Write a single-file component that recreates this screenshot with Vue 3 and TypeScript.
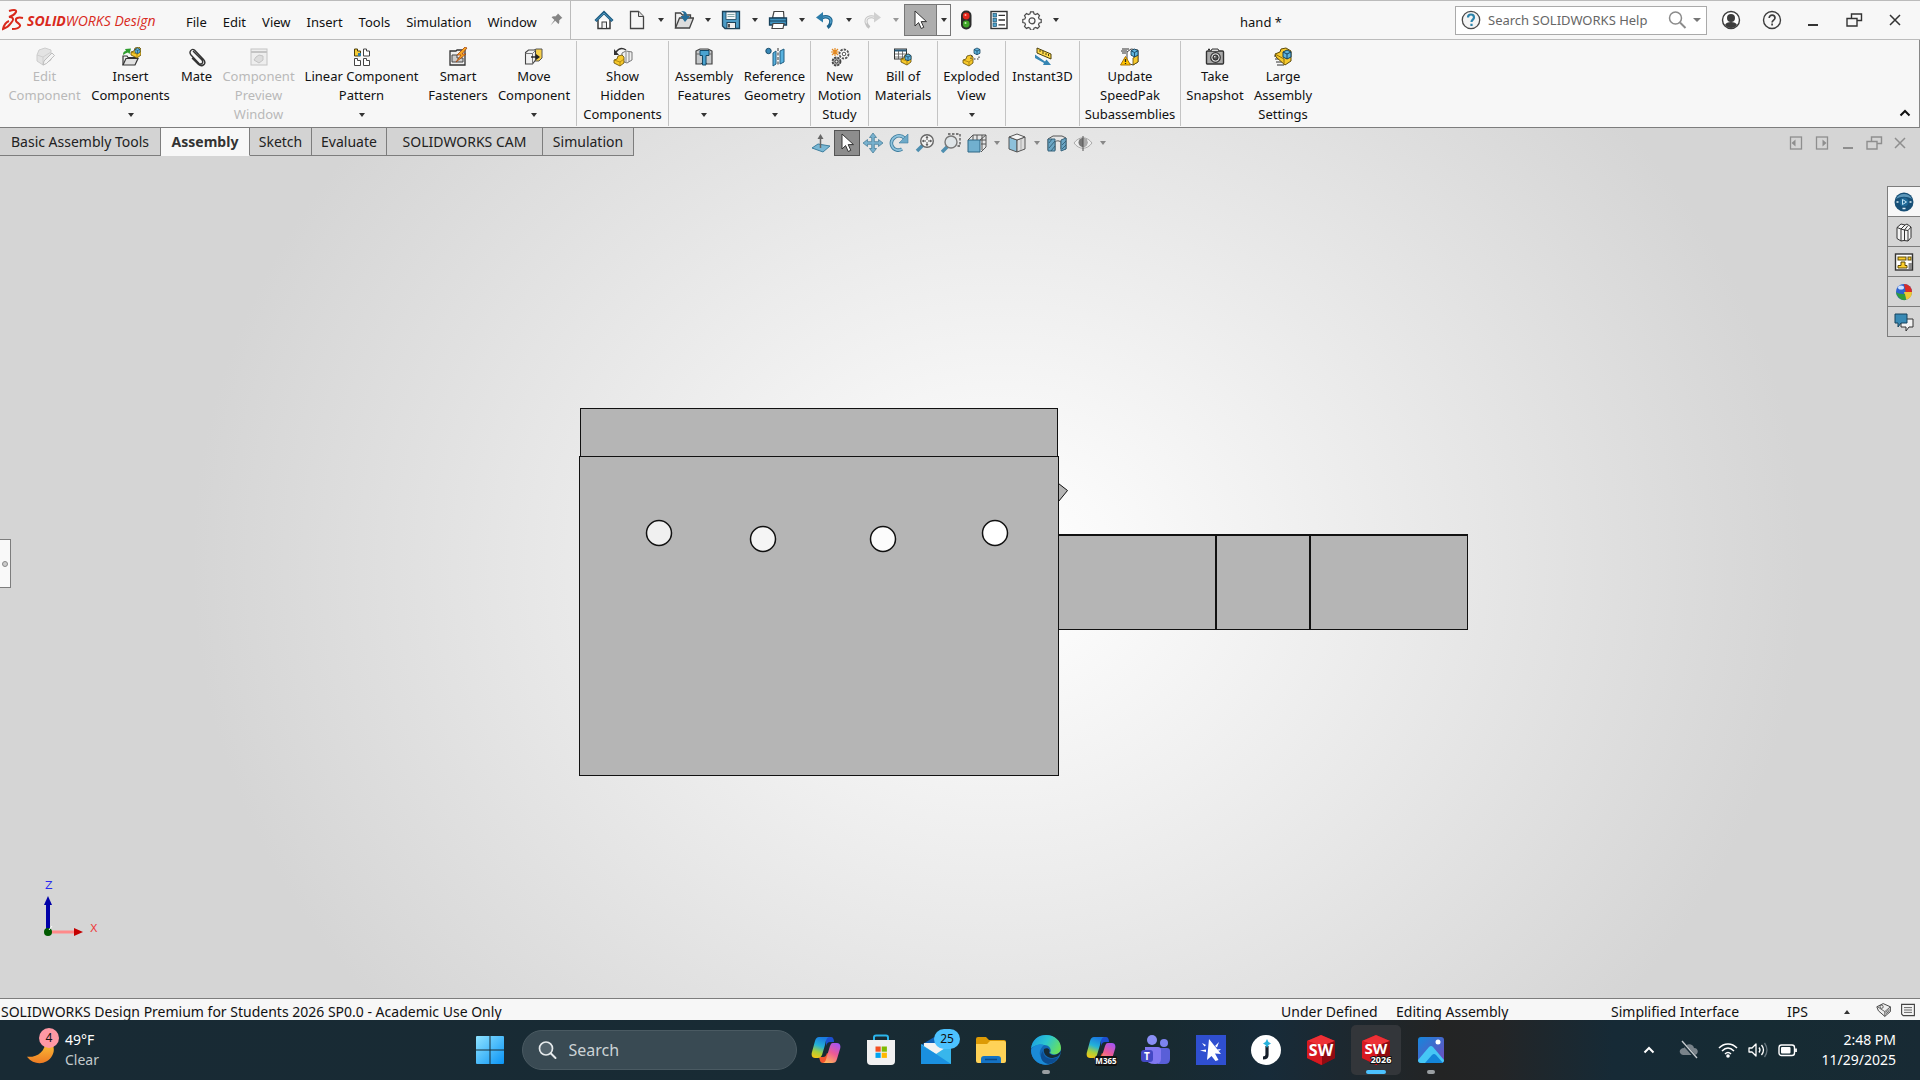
<script setup lang="ts">
interface RibbonItem { icon: string; lines: string[]; width: number; caret?: boolean; disabled?: boolean }
interface Tool { icon: string; label: string; caret?: boolean; disabled?: boolean; active?: boolean }

const menus = ['File', 'Edit', 'View', 'Insert', 'Tools', 'Simulation', 'Window']

const quickTools: Tool[] = [
  { icon: 'home', label: 'Home' },
  { icon: 'page', label: 'New', caret: true },
  { icon: 'open', label: 'Open', caret: true },
  { icon: 'save', label: 'Save', caret: true },
  { icon: 'print', label: 'Print', caret: true },
  { icon: 'undo', label: 'Undo', caret: true },
  { icon: 'redo', label: 'Redo', caret: true, disabled: true },
  { icon: 'cursor', label: 'Select', caret: true, active: true },
  { icon: 'traffic', label: 'Rebuild' },
  { icon: 'list', label: 'Properties' },
  { icon: 'gear', label: 'Options', caret: true },
]

const windowTools: Tool[] = [
  { icon: 'user', label: 'Account' },
  { icon: 'help', label: 'Help' },
  { icon: 'min', label: 'Minimize' },
  { icon: 'restore', label: 'Restore' },
  { icon: 'close', label: 'Close' },
]

const ribbonGroups: RibbonItem[][] = [
  [
    { icon: 'editPart', lines: ['Edit', 'Component'], width: 83, disabled: true },
    { icon: 'insertPart', lines: ['Insert', 'Components'], width: 89, caret: true },
    { icon: 'clip', lines: ['Mate'], width: 43 },
    { icon: 'preview', lines: ['Component', 'Preview', 'Window'], width: 81, disabled: true },
    { icon: 'pattern', lines: ['Linear Component', 'Pattern'], width: 125, caret: true },
    { icon: 'smart', lines: ['Smart', 'Fasteners'], width: 68 },
    { icon: 'move', lines: ['Move', 'Component'], width: 84, caret: true },
  ],
  [{ icon: 'showHidden', lines: ['Show', 'Hidden', 'Components'], width: 91 }],
  [
    { icon: 'asmFeature', lines: ['Assembly', 'Features'], width: 70, caret: true },
    { icon: 'refGeom', lines: ['Reference', 'Geometry'], width: 71, caret: true },
  ],
  [{ icon: 'motion', lines: ['New', 'Motion', 'Study'], width: 57 }],
  [{ icon: 'bom', lines: ['Bill of', 'Materials'], width: 68 }],
  [{ icon: 'explode', lines: ['Exploded', 'View'], width: 67, caret: true }],
  [{ icon: 'instant', lines: ['Instant3D'], width: 73 }],
  [{ icon: 'speedpak', lines: ['Update', 'SpeedPak', 'Subassemblies'], width: 100 }],
  [
    { icon: 'camera', lines: ['Take', 'Snapshot'], width: 68 },
    { icon: 'largeAsm', lines: ['Large', 'Assembly', 'Settings'], width: 68 },
  ],
]

const tabs = [
  { name: 'Basic Assembly Tools', width: 161 },
  { name: 'Assembly', width: 89 },
  { name: 'Sketch', width: 62 },
  { name: 'Evaluate', width: 75 },
  { name: 'SOLIDWORKS CAM', width: 156 },
  { name: 'Simulation', width: 91 },
]
const activeTab = 'Assembly'

const viewTools: Tool[] = [
  { icon: 'normalTo', label: 'Normal To' },
  { icon: 'cursor', label: 'Select', active: true },
  { icon: 'pan', label: 'Pan' },
  { icon: 'rotate', label: 'Rotate' },
  { icon: 'zoomFit', label: 'Zoom to Fit' },
  { icon: 'zoomArea', label: 'Zoom to Area' },
  { icon: 'orient', label: 'View Orientation', caret: true },
  { icon: 'display', label: 'Display Style', caret: true },
  { icon: 'section', label: 'Section View' },
  { icon: 'eye', label: 'Hide/Show Items', caret: true },
]

const docTools: Tool[] = [
  { icon: 'paneLeft', label: 'Collapse left' },
  { icon: 'paneRight', label: 'Collapse right' },
  { icon: 'min', label: 'Minimize document' },
  { icon: 'restore', label: 'Restore document' },
  { icon: 'close', label: 'Close document' },
]

const paneTools: Tool[] = [
  { icon: 'compass', label: 'Resources', active: true },
  { icon: 'books', label: 'Design Library' },
  { icon: 'palette', label: 'View Palette' },
  { icon: 'ball', label: 'Appearances' },
  { icon: 'forum', label: 'Forum' },
]

const holes = [
  { x: 659, y: 405, fill: '#f0f0f0' },
  { x: 763, y: 411, fill: '#f5f5f5' },
  { x: 883, y: 411, fill: '#fcfcfc' },
  { x: 995, y: 405, fill: '#ffffff' },
]

const apps = [
  { icon: 'copilot', label: 'Copilot' },
  { icon: 'store', label: 'Store' },
  { icon: 'mail', label: 'Mail', badge: '25' },
  { icon: 'folder', label: 'File Explorer' },
  { icon: 'edge', label: 'Edge', state: 'open' },
  { icon: 'm365', label: 'Microsoft 365' },
  { icon: 'teams', label: 'Teams' },
  { icon: 'star', label: 'Star' },
  { icon: 'jot', label: 'J' },
  { icon: 'sw', label: 'SOLIDWORKS' },
  { icon: 'sw26', label: 'SOLIDWORKS 2026', state: 'current' },
  { icon: 'photos', label: 'Photos', state: 'open' },
]

const yellowPart = (x: number, y: number) =>
  `<g transform="translate(${x} ${y})"><path d="M0 5l3-1 1-3 4-1 2 2v6l-4 3-6-3z" fill="#f7c92c" stroke="#5d4a08" stroke-width=".8"/><path d="M0 5l6 2 4-3M6 7v4" fill="none" stroke="#a57c08" stroke-width=".8"/></g>`

const bluecube = (x: number, y: number, s = 7) =>
  `<g transform="translate(${x} ${y}) scale(${s / 8})"><path d="M0 2l4-2 4 2v5l-4 2-4-2z" fill="#5fb4dc" stroke="#16405c"/><path d="M0 2l4 2 4-2M4 4v5" fill="none" stroke="#16405c"/></g>`

const swCube = (size: number, base: number) =>
  '<path d="M2 7L16 1l14 6v17L16 31 2 24z" fill="#b01018"/><path d="M2 7L16 1l14 6-13 5z" fill="#ee3036"/><path d="M2 7l15 5v19L2 24z" fill="#d71920"/><path d="M30 7l-13 5v19l13-7z" fill="#8f0b12"/>' +
  `<text x="16" y="${base}" font-size="${size}" font-weight="700" text-anchor="middle" fill="#fff">SW</text>`

const ribbonLoops = (id: string) =>
  `<defs><linearGradient id="${id}a" x1=".5" y1="0" x2=".2" y2="1"><stop offset="0" stop-color="#1a7be0"/><stop offset=".4" stop-color="#24b2d8"/><stop offset=".7" stop-color="#a8cf3c"/><stop offset="1" stop-color="#f7c613"/></linearGradient><linearGradient id="${id}b" x1=".8" y1="0" x2=".3" y2="1"><stop offset="0" stop-color="#a554f5"/><stop offset=".5" stop-color="#ee5a94"/><stop offset="1" stop-color="#ffb25c"/></linearGradient></defs>` +
  `<path d="M16 3h5c2 0 3 2 3 5h-4c-2 0-3 1-4 4z" fill="#1d4fd0"/><path d="M16 29h-3c-3 0-3-3-4-6h4c2 0 3-1 4-4l3 2z" fill="#f4562f"/><path d="M9 3h10c-3 1-3 4-4 8l-3 10c-1 2-2 3-4 3H5c-3 0-4-3-3-6L5 7c1-3 2-4 4-4z" fill="url(#${id}a)"/><path d="M23 9h4c3 0 4 3 3 6l-3 10c-1 3-2 4-5 4h-9c3-1 3-4 4-7l3-10c1-2 1-3 3-3z" fill="url(#${id}b)"/>`

const icons: Record<string, string> = {
  home: '<path d="M4 10v8.500h12V10" fill="#fff" stroke="#3b3b3b" stroke-width="1.500"/><rect x="8" y="12" width="4.500" height="6.500" fill="#eee" stroke="#3b3b3b"/><path d="M1.500 11L10 2.500l8.500 8.500" fill="none" stroke="#1b5a80" stroke-width="3"/><path d="M2 10.500L10 3l8 7.500" fill="none" stroke="#5aa7cf" stroke-width=".8"/>',
  page: '<path d="M3.500 1.500h8l5 5v12h-13z" fill="#f6f6f6" stroke="#444" stroke-width="1.300"/><path d="M11.500 1.500v5h5" fill="#ddd" stroke="#444"/>',
  open: '<path d="M1.500 18V3h5l2 2h8v3" fill="#f2f2f2" stroke="#444" stroke-width="1.300"/><path d="M1.500 18l4-10h14l-4 10z" fill="#ddd" stroke="#444" stroke-width="1.300"/><path d="M7 1c4 0 6 1 6 5h3l-5 6-4.500-6H10C10 3 9 2 7 1z" fill="#256d97"/>',
  save: '<path d="M1.500 1.500h17v17H4l-2.500-2.500z" fill="#4d9cc6" stroke="#1d4258" stroke-width="1.300"/><rect x="5" y="2" width="10" height="7.500" fill="#f4f8fa" stroke="#1d4258" stroke-width=".8"/><path d="M6.500 4.500h7M6.500 6.500h7" stroke="#8aa"/><rect x="6" y="12.500" width="8.500" height="6" fill="#eee" stroke="#1d4258"/><path d="M8 14v3.500" stroke="#222" stroke-width="1.500"/>',
  print: '<path d="M4.500 8L6 1.500h9.500L16 8z" fill="#fff" stroke="#444" stroke-width="1.200"/><path d="M1.500 8h17v7h-17z" fill="#4293bf" stroke="#17425c" stroke-width="1.300"/><path d="M1.500 11h17" stroke="#17425c"/><path d="M5 13.500h11l-1 5H4z" fill="#fff" stroke="#444" stroke-width="1.200"/>',
  undo: '<path d="M6.500 8C12 5 17.500 8 15.500 13.500 15 15 14 16.500 12.500 17.500" fill="none" stroke="#1f658e" stroke-width="3.400"/><path d="M6.500 8C12 5 17.500 8 15.500 13.500" fill="none" stroke="#58a9d4" stroke-width="1.200"/><path d="M1 7.500L8 2v10.500z" fill="#2c7ca9"/>',
  redo: '<path d="M13.500 8C8 5 2.500 8 4.500 13.500c.5 1.500 1.500 3 3 4" fill="none" stroke="#c3c3c3" stroke-width="3"/><path d="M13.500 8C8 5 2.500 8 4.500 13.500" fill="none" stroke="#eee" stroke-width="1.200"/><path d="M19 7.500L12 2v10.500z" fill="#d0d0d0"/>',
  cursor: '<path d="M5 1v15l3.600-3.400 2.600 5.900 2.600-1.200-2.600-5.700h5.300z" fill="#fff" stroke="#333"/>',
  traffic: '<rect x="5" y=".5" width="10.500" height="19" rx="5" fill="#2c2c2c"/><circle cx="10.200" cy="6" r="3.400" fill="#e2271c"/><circle cx="10.200" cy="14" r="3.400" fill="#3fa428"/><circle cx="9.500" cy="5" r="1" fill="#ffb0a0"/><circle cx="9.500" cy="13" r="1" fill="#c0f0b0"/>',
  list: '<rect x="2" y="1.500" width="16" height="17" fill="#fff" stroke="#333" stroke-width="1.400"/><g fill="#4fa3cd" stroke="#1c4d69" stroke-width=".7"><rect x="4" y="3.500" width="3.500" height="3.500"/><rect x="4" y="8.300" width="3.500" height="3.500"/><rect x="4" y="13" width="3.500" height="3.500"/></g><path d="M9.500 5.300h6.500M9.500 10h6.500M9.500 14.800h6.500" stroke="#333" stroke-width="1.300"/>',
  gear: '<path d="M8.500 1.800h3l.5 2 1.600.7 1.900-1 2 2-1 1.900.7 1.600 2 .5v3l-2 .5-.7 1.500 1 1.900-2 2-1.900-1-1.600.7-.5 2h-3l-.5-2-1.600-.7-1.900 1-2-2 1-1.900-.7-1.500-2-.5v-3l2-.5.7-1.600-1-1.900 2-2 1.900 1 1.600-.7z" fill="#fcfcfc" stroke="#4c4c4c" stroke-width="1.200"/><circle cx="10" cy="10.800" r="3" fill="#f7f7f7" stroke="#4c4c4c" stroke-width="1.200"/>',
  pin: '<path d="M12.500 2l5.500 5.500-1.500.5-2.500 2.500c.5 2 0 3.500-1 4.500L9 11l-6 6 5-7-3.500-3.500c1-1 2.500-1.500 4.500-1l2.500-2z" fill="#858585"/>',
  qmark: '<circle cx="10" cy="10" r="8.700" fill="#f4f4f4" stroke="#4a4a4a" stroke-width="1.300"/><path d="M7 7.500c0-4 6-4 6 0 0 2-2.500 2.200-2.500 4.500M10.500 13.800V16" fill="none" stroke="#2c83ab" stroke-width="2.200"/>',
  lens: '<circle cx="8.500" cy="8" r="6" fill="none" stroke="#8b8b8b" stroke-width="1.500"/><path d="M13 12.500l5.500 5.500" stroke="#8b8b8b" stroke-width="2"/>',
  user: '<circle cx="10" cy="10" r="8.500" fill="#fff" stroke="#3c3c3c" stroke-width="1.400"/><circle cx="10" cy="8" r="4" fill="#3c3c3c"/><path d="M4 15c1-4 11-4 12 0-3 4-9 4-12 0z" fill="#3c3c3c"/>',
  help: '<circle cx="10" cy="10" r="8.500" fill="none" stroke="#3c3c3c" stroke-width="1.400"/><path d="M7.200 8c0-4 5.800-3.600 5.800 0 0 2-2.900 2.200-2.900 4.500M10.100 13.600v2" fill="none" stroke="#3c3c3c" stroke-width="1.700"/>',
  min: '<path d="M5 15h10" stroke="currentColor" stroke-width="2"/>',
  restore: '<path d="M7.500 8.500V4h10v6.500h-4M3 8.500h10V16H3z" fill="none" stroke="currentColor" stroke-width="1.400"/>',
  close: '<path d="M5 5l10 10M15 5L5 15" stroke="currentColor" stroke-width="1.500"/>',
  editPart: '<path d="M2 8l2-5 6-2 6 2v10l-8 5-6-4z" fill="#e3e3e3" stroke="#cdcdcd"/><path d="M2 8l6 2 8-5M8 10v8" fill="none" stroke="#cfcfcf"/><path d="M8 18l1-4 8-8 2.500 2.500-8 8z" fill="#f4f4f4" stroke="#bdbdbd"/>',
  insertPart: `<path d="M2 18V9h4l1 1.500h8V13" fill="#eee" stroke="#333" stroke-width="1.200"/><path d="M2 18l3-6.500h12L14 18z" fill="#e2e2e2" stroke="#333" stroke-width="1.200"/>${yellowPart(10, 0)}${bluecube(14, 1, 5)}<path d="M2 8C2 5 3 4 5 4L4 2l6-.500L8.500 7 7 5.500C5 6 4 7 2 8z" fill="#2f9e2f"/>`,
  clip: '<path d="M6 4l9 9c2 3-1 5-3 3.500L4 8C1.500 5 4.500 1 7.500 3l9 9.500c3.500 4-1 8-5 5L5 11" fill="none" stroke="#333" stroke-width="1.400"/>',
  preview: '<rect x="2" y="2" width="16" height="16" fill="#eee" stroke="#c4c4c4"/><path d="M2 5h16" stroke="#c4c4c4" stroke-width="2"/><path d="M5 13l2-3 3-2 4 1v4l-4 3z" fill="#ddd" stroke="#c4c4c4"/>',
  pattern: '<path d="M2.500 2h3v2h3v5h-6z" fill="#f6cd37" stroke="#4b3d0a"/><rect x="6" y="6" width="3" height="3" fill="#2a7cad"/><g fill="#fff" stroke="#444"><path d="M11.500 2h3v2h3v5h-6zM2.500 11.500h3v2h3v5h-6zM11.500 11.500h3v2h3v5h-6z"/></g>',
  smart: '<path d="M2 4h6l1-1h8v15H2z" fill="#eee" stroke="#333" stroke-width="1.300"/><path d="M4 8h5v3h6v4H4z" fill="#ccc" stroke="#444"/><path d="M17 0l-8 8h4l-5 7 10-8h-4l5-6z" fill="#f6a623" stroke="#a3420f" stroke-width=".8"/>',
  move: '<path d="M9 4l3-2h6v9l-3 3H9z" fill="#f7d04a" stroke="#555"/><path d="M1.500 5.500l3-2.500h7v10l-3 4h-7z" fill="#f1f1f1" stroke="#444" stroke-width="1.100"/><path d="M1.500 6.500h7v10M8.500 6.500l3-3" fill="none" stroke="#777"/><path d="M7 10h6" stroke="#222" stroke-width="1.400"/><path d="M12 7l4 3-4 3z" fill="#222"/>',
  showHidden: `<path d="M9 6l4-2 6 1v8l-5 3-5-2z" fill="#f0f0f0" stroke="#777"/><path d="M13 5v10M16 5v10" stroke="#888"/>${yellowPart(1, 8)}<path d="M3 5c3-4 7-4 10-2" fill="none" stroke="#333" stroke-width="1.500"/><path d="M1 2v6h5z" fill="#333"/>`,
  asmFeature: '<path d="M2 4l4-2h8l4 2v13h-5l-3-2-3 2H2z" fill="#c5c8ca" stroke="#444" stroke-width="1.200"/><path d="M6 3.500h9v5h-3V18H8.500V8.500H6z" fill="#4ba3d0" stroke="#154966"/><path d="M2 7h4M15 7h3" stroke="#666"/>',
  refGeom: '<circle cx="3.500" cy="4" r="2.700" fill="#3989b7" stroke="#1a4d6c"/><path d="M8 6l3-2v13l-3 2zM15 4l4-2v13l-4 2z" fill="#58b2df" stroke="#205d80"/><path d="M13 1v18" stroke="#333" stroke-dasharray="3 1.500"/>',
  motion: '<path d="M5 1v8M1 5h8M2 2l6 6M8 2L2 8" stroke="#e48a22" stroke-width="1.200"/><circle cx="14" cy="7" r="4.500" fill="#fff" stroke="#555" stroke-width="1.800" stroke-dasharray="2.300 1.100"/><circle cx="14" cy="7" r="1.800" fill="none" stroke="#555"/><circle cx="6.500" cy="14.500" r="4" fill="#aaa" stroke="#444" stroke-width="1.800" stroke-dasharray="2.200 1"/><circle cx="6.500" cy="14.500" r="1.500" fill="#eee" stroke="#333"/>',
  bom: `<rect x="1.500" y="2" width="12" height="10" fill="#fff" stroke="#333"/><path d="M1.500 3.500h12" stroke="#2a5d7c" stroke-width="2"/><path d="M2 7h11M2 10h11M5.500 4v8M9.500 4v8" stroke="#555" stroke-width=".8"/>${yellowPart(8, 7)}${bluecube(12, 7, 6)}`,
  explode: `${yellowPart(1, 8)}${bluecube(12, 1, 6)}<path d="M12 12h5V9M9 12v-3h2" fill="none" stroke="#333" stroke-dasharray="1.500 1.500"/>`,
  instant: '<path d="M4 1l14 6v5L4 6z" fill="#ffd94a" stroke="#4d400c"/><path d="M7 3v2M10 4v3M13 6v2M15.500 7v2" stroke="#4d400c"/><path d="M2 7.500l10 7 1.500-2L18 18h-8l1-2-9-5z" fill="#3686b4"/>',
  speedpak: `<path d="M2 2h7M1 4h6M2 6h4" stroke="#333"/><path d="M7 5l4-3 7 1v12l-5 3-6-2z" fill="#fff" stroke="#444"/><path d="M13 11l5-3v7l-5 3z" fill="#f7c92c" stroke="#5d4a08" stroke-width=".8"/>${bluecube(11, 2, 7)}<path d="M5.500 9.500l5 8.500H.5z" fill="#ffc400" stroke="#ad7400"/><path d="M5.500 12v3M5.500 16v1" stroke="#222" stroke-width="1.300"/>`,
  camera: '<rect x="1.500" y="4" width="17" height="13" rx="1" fill="#aaa" stroke="#333" stroke-width="1.400"/><path d="M6 4l1-2h6l1 2" fill="#ddd" stroke="#333"/><path d="M3 2.500h2" stroke="#333" stroke-width="1.500"/><circle cx="10.500" cy="10.500" r="4.800" fill="#ddd" stroke="#333" stroke-width="1.200"/><circle cx="10.500" cy="10.500" r="2.600" fill="#555" stroke="#222"/><circle cx="9.800" cy="9.800" r=".8" fill="#fff"/>',
  largeAsm: `<path d="M1 9h6M2 12h5M3 15h6M4 18h7" stroke="#333"/><path d="M2 7l5-2 1-3 5-1 5 3v10l-6 4-9-8z" fill="#f7c92c" stroke="#5d4a08"/><path d="M2 7l9 5v6" fill="none" stroke="#8c6d0a"/>${bluecube(10, 3, 8)}`,
  chevronUp: '<path d="M5.500 12.500L10 8l4.500 4.500" fill="none" stroke="currentColor" stroke-width="2"/>',
  normalTo: '<path d="M1 15l6-4 12 2-7 6z" fill="#79b7d4" stroke="#3d7f9f"/><path d="M9.500 15V4" stroke="#666" stroke-width="1.500"/><path d="M6.500 6l3-5 3 5z" fill="#666"/>',
  pan: '<path d="M10 0l3.500 4.500H11.300V8.700h4.200V6.500L20 10l-4.500 3.500v-2.200h-4.200v4.200h2.200L10 20l-3.500-4.500h2.200v-4.200H4.500v2.200L0 10l4.500-3.500v2.200h4.200V4.500H6.500z" fill="#79b2cf" stroke="#3c7592" stroke-width=".7"/>',
  rotate: '<path d="M16 5.500C9-1 0 6 3 13c2 4.500 7 5 10 3" fill="none" stroke="#3f7e9f" stroke-width="3.600"/><path d="M16 5.500C9-1 0 6 3 13c2 4.500 7 5 10 3" fill="none" stroke="#8fc3dd" stroke-width="1.800"/><path d="M19 1v9h-9z" fill="#6da9c8" stroke="#3f7e9f" stroke-width=".6"/>',
  zoomFit: '<path d="M8 12l-6 6" stroke="#4f8fb0" stroke-width="3.500"/><circle cx="12" cy="8" r="6.300" fill="#f2f2f2" stroke="#666" stroke-width="1.400"/><path d="M12 3.500v9M7.500 8h9M11 5l1-1.500L13 5M11 11l1 1.500 1-1.500M9 7L7.500 8 9 9M15 7l1.500 1L15 9" fill="none" stroke="#555"/><rect x="11" y="7" width="2" height="2" fill="#f2f2f2"/>',
  zoomArea: '<path d="M7 1h12v12h-3" fill="none" stroke="#555" stroke-dasharray="2.500 1.500" stroke-width="1.300"/><path d="M7 13l-6 6" stroke="#4f8fb0" stroke-width="3.500"/><circle cx="10" cy="9" r="6" fill="#dfe5e8" stroke="#777" stroke-width="1.400"/>',
  orient: '<path d="M1 7h12v12H1z" fill="#71b0cf" stroke="#2f6784"/><path d="M1 7l5-5h13v12l-5 5M6 2v5M13 7l6-5M10 2v5M19 7h-6M19 11h-5M15 2v15" fill="none" stroke="#555"/>',
  display: '<path d="M2 4l8 3v12l-8-3z" fill="#8ec1da" stroke="#555"/><path d="M10 7l8-3v12l-8 3z" fill="#dcdcdc" stroke="#555"/><path d="M2 4l8-3 8 3-8 3z" fill="#f5f5f5" stroke="#555"/><path d="M14 6v11" stroke="#aaa"/>',
  section: '<path d="M1 6l5-3h9l4 2v11h-5V9c-3-2-5-1-6 0v8H1z" fill="#e5e5e5" stroke="#555"/><path d="M1 6h7v12H1zM14 7l5-2v11l-5 2z" fill="#6ba6c5" stroke="#38657d"/><path d="M2 10l3-4M2 15l6-7M4 18l4-5M15 12l4-4M15 16l4-4" stroke="#2d556b" stroke-width=".8"/>',
  eye: '<path d="M1 10c5-7 13-7 18 0-5 7-13 7-18 0z" fill="#eee" stroke="#aaa"/><circle cx="10" cy="9.500" r="4.500" fill="#777"/><path d="M10 5a4.500 4.500 0 010 9z" fill="#aaa"/><path d="M10 3v15" stroke="#555"/>',
  paneLeft: '<rect x="4.500" y="4" width="11" height="12" fill="none" stroke="currentColor" stroke-width="1.300"/><path d="M9.500 6.500v7L5.500 10z" fill="currentColor"/>',
  paneRight: '<rect x="4.500" y="4" width="11" height="12" fill="none" stroke="currentColor" stroke-width="1.300"/><path d="M10.500 6.500v7l4-3.500z" fill="currentColor"/>',
  compass: '<circle cx="10" cy="10" r="9.500" fill="#174f76"/><path d="M2 7a9 9 0 0116 0c-5-3-11-3-16 0z" fill="#5d98bb"/><circle cx="10" cy="10" r="4.500" fill="#1f6896"/><path d="M8.500 7.500v5l4-2.500z" fill="none" stroke="#c2e4f5"/><path d="M2.500 10h2M15.500 10h2M8.500 16.500h3" stroke="#dceffa" stroke-width="1.500"/>',
  books: '<path d="M3 5.500l4-3.500 4 1 2-1 4 3v10.500L14 19l-4-.5-3 .5-4-2.500z" fill="#f4f4f4" stroke="#333"/><path d="M3 5.500l4 1.500v12M7 7l4-4M10.500 8v10.500M7 7l3.500 1L14 3.500M10.500 8L14 8.500V19M14 8.500L17 5" fill="none" stroke="#333"/>',
  palette: '<rect x="1.500" y="2" width="17" height="16" fill="#fff" stroke="#333" stroke-width="1.400"/><rect x="4" y="5" width="8" height="3" fill="#ffd02b" stroke="#5d4a08"/><rect x="14" y="5" width="3" height="3" fill="#ffd02b" stroke="#5d4a08"/><path d="M4 13.500h3V10h4v3.500h2V16H4z" fill="#ffd02b" stroke="#5d4a08"/><path d="M14.500 11H18v6h-3.500z" fill="#888"/>',
  ball: '<circle cx="10" cy="10" r="8" fill="#2c64cf"/><path d="M10 2a8 8 0 018 8l-6 2z" fill="#d92b25"/><path d="M18 10a8 8 0 01-6 7.800L10 10z" fill="#efc832"/><path d="M2 10c2 2 6 2 9 2l1 6C7 19 3 15 2 10z" fill="#319c3a"/><ellipse cx="7" cy="5.500" rx="3" ry="2" fill="#cfe1ff"/>',
  forum: '<path d="M7 7h12v8h-4l-3 4v-4H7z" fill="#f3f3f3" stroke="#333"/><path d="M1 2h12v9H7l-3 4v-4H1z" fill="#398ab5" stroke="#17435c"/>',
  tag: '<path d="M1 6l8-4 9 4v6l-7 6-8-7z" fill="#eee" stroke="#444" stroke-width="1.200"/><path d="M11 18v-6l7-6M11 12L2 6M12 13l5-4M12 15l5-4" fill="none" stroke="#444"/><circle cx="7" cy="6" r="2" fill="none" stroke="#444"/>',
  note: '<path d="M2 3h16v14H4l-2-2z" fill="#f4f4f4" stroke="#444" stroke-width="1.400"/><path d="M5 7h10M5 10h10M5 13h10" stroke="#444"/>',
  start: '<defs><linearGradient id="st" x1="0" y1="0" x2="1" y2="1"><stop offset="0" stop-color="#8fe3ff"/><stop offset="1" stop-color="#0a94f5"/></linearGradient></defs><path d="M2 3q0-1 1-1h12.500v13.500H2zM16.500 2H29q1 0 1 1v12.500H16.500zM2 16.500h13.500V30H3q-1 0-1-1zM16.500 16.500H30V29q0 1-1 1H16.500z" fill="url(#st)"/>',
  taskLens: '<circle cx="9" cy="8.500" r="6.500" fill="#53636c" stroke="#e6eaec" stroke-width="1.700"/><path d="M13.700 13.200L18.500 18" stroke="#e6eaec" stroke-width="2" stroke-linecap="round"/>',
  copilot: ribbonLoops('cp'),
  store: '<path d="M9 8V3.500q0-2 2-2h10q2 0 2 2V8" fill="none" stroke="#2bb5ec" stroke-width="2"/><path d="M2 6h28v21q0 4-4 4H6q-4 0-4-4z" fill="#f1f1f1"/><path d="M10.500 12.500h5.200v5.200h-5.200z" fill="#f25022"/><path d="M16.700 12.500h5.200v5.200h-5.200z" fill="#7fba00"/><path d="M10.500 18.700h5.200v5.200h-5.200z" fill="#00a4ef"/><path d="M16.700 18.700h5.200v5.200h-5.200z" fill="#ffb900"/>',
  mail: '<path d="M1 11L16 2l15 9v19H1z" fill="#0f5fb4"/><path d="M4 9h24v9l-12 7L4 18z" fill="#f2f2f2"/><path d="M1 10l15 10L31 10v20H1z" fill="#38b6ec"/><path d="M1 30V11l15 9 15 10z" fill="#1a90e0"/>',
  folder: '<path d="M1 5q0-2 2-2h8l3 3h15q2 0 2 2v6H1z" fill="#dd9a05"/><path d="M1 10h11l3-3h14q2 0 2 2v18q0 2-2 2H3q-2 0-2-2z" fill="#ffd257"/><path d="M6 29v-4q0-3 3-3h14q3 0 3 3v4z" fill="#1573c4"/><path d="M10 25.500h12" stroke="#0c4884" stroke-width="1.500"/>',
  edge: '<defs><linearGradient id="ed" x1="0" y1=".2" x2="1" y2=".6"><stop offset="0" stop-color="#1b9de2"/><stop offset=".5" stop-color="#2cc6cf"/><stop offset="1" stop-color="#69e05b"/></linearGradient></defs><circle cx="16" cy="16" r="15" fill="#1267b4"/><path d="M1 15C2 5 9 1 16 1c9 0 15 6 15 13 0 6-7 8-11 5 2-3 0-8-6-8C7 10 2 13 1 15z" fill="url(#ed)"/><path d="M14 11c-3 3-5 6-4 10 1 5 6 8 12 8C12 34 1 27 1 16c2-4 8-7 13-5z" fill="#1b8bd7"/><path d="M13 17c0 7 8 10 15 6-2 4-5 7-10 7-7-1-9-9-5-13z" fill="#0c4d91"/><path d="M14 15c4-2 7 1 5 4 3 3 8 3 12-2-1 5-5 7-10 7-5-1-8-5-7-9z" fill="#172b35"/>',
  m365: ribbonLoops('mc') + '<rect x="10" y="22" width="22" height="10" rx="2" fill="#111"/><text x="21" y="30" font-size="8" font-weight="700" text-anchor="middle" fill="#fff">M365</text>',
  teams: '<circle cx="12" cy="6" r="5" fill="#8a8ff5"/><circle cx="24" cy="9" r="4" fill="#7c83ef"/><path d="M18 14h9q3 0 3 3v8q0 5-5 5h-7z" fill="#595fd8"/><path d="M5 13h13q3 0 3 3v9q0 5-6 5-8 0-10-6z" fill="#8178f1"/><rect x="1" y="16" width="12" height="12" rx="3" fill="#4348c4"/><text x="7" y="25.500" font-size="10" font-weight="700" text-anchor="middle" fill="#fff">T</text>',
  star: '<rect x="1" y="1" width="30" height="30" fill="#2f4fd0"/><path d="M14 5l12 15-6-.5 3.500 6.500-3 1-4-5-4.500 4z" fill="#fff"/><path d="M5 16.500l6-1v2.500zM7 9l4 2-1.500 1.500zM20 12l4-4-2 5.500zM22 15.500l4-.5-2 2z" fill="#fff"/>',
  jot: '<circle cx="16" cy="16" r="15" fill="#fff"/><path d="M17 12v9q0 3-4 3" fill="none" stroke="#16202b" stroke-width="3.200"/><path d="M17 5l1.500 3L21 9.500 18.500 11 17 14l-1.500-3L13 9.500 15.500 8z" fill="#27b2dc"/>',
  sw: swCube(16, 22),
  sw26: swCube(15, 20) + '<text x="21" y="29" font-size="9" font-weight="700" text-anchor="middle" fill="#fff" stroke="#111" stroke-width="2" paint-order="stroke">2026</text>',
  photos: '<defs><linearGradient id="ph" x1="0" y1="0" x2="1" y2="1"><stop offset="0" stop-color="#1587dc"/><stop offset="1" stop-color="#7449bb"/></linearGradient></defs><rect x="3" y="3" width="26" height="26" rx="3" fill="url(#ph)"/><path d="M3 26l11-13q2-2 4 0l11 13q0 3-3 3H6q-3 0-3-3z" fill="#45c7f5"/><path d="M10 29l7-8q2-2 4 0l7 8z" fill="#1385d8"/><circle cx="23" cy="8" r="2.500" fill="#fff"/>',
  moon: '<defs><linearGradient id="mn" x1="0" y1="0" x2="0" y2="1"><stop offset="0" stop-color="#ffd63c"/><stop offset="1" stop-color="#ee7b24"/></linearGradient></defs><path d="M20 2c8 4 11 13 7 20-5 9-18 11-26 1 12 1 21-7 19-21z" fill="url(#mn)"/>',
  cloudOff: '<path d="M4 15c-5-1-4-7 1-7 2-5 9-5 10 0 5 0 5 7 0 7z" fill="#79838a"/><path d="M2 1l16 18" stroke="#172b35" stroke-width="3"/><path d="M3 1l15 17" stroke="#c9ced1" stroke-width="1.300"/>',
  wifi: '<path d="M1 8c5-5.500 13-5.500 18 0M4 11c4-4 8-4 12 0M7 14c2-2 4-2 6 0" fill="none" stroke="#fff" stroke-width="1.500"/><circle cx="10" cy="16" r="1.800" fill="#fff"/>',
  volume: '<path d="M1 8h3l4-4v12l-4-4H1z" fill="none" stroke="#fff" stroke-width="1.300" stroke-linejoin="round"/><path d="M11 7.500q2 2.500 0 5M13.500 5q4 5 0 10" fill="none" stroke="#fff" stroke-width="1.300"/><path d="M16.500 3q5 7 0 14" fill="none" stroke="#66757d" stroke-width="1.300"/>',
  battery: '<rect x="1" y="5" width="15.500" height="10.500" rx="2.500" fill="none" stroke="#fff" stroke-width="1.400"/><rect x="3" y="7" width="9.500" height="6.500" rx="1" fill="#fff"/><path d="M18 8.500v3.500" stroke="#fff" stroke-width="1.800"/>',
}
</script>

<template>
  <div class="desktop">
    <header class="titlebar">
      <div class="brand-menu">
        <div class="brand">
          <svg class="ds" viewBox="0 0 22 24" aria-hidden="true">
            <path d="M7 3c3-1 8-2 7 1-1 2-4 4-7 5 5 0 5 3 2 6-2 3-5 5-8 6 1-4 3-7 6-8M21 10c-5-1-8 0-7 3 1 2 5 3 4 5-1 3-5 3-8 3" fill="none" stroke="#d9291c" stroke-width="2" />
          </svg>
          <span><b>SOLID</b>WORKS <i>Design</i></span>
        </div>
        <nav class="menus">
          <button v-for="m in menus" :key="m" type="button">{{ m }}</button>
        </nav>
        <button class="pin" type="button" aria-label="Pin menu">
          <svg class="ico" viewBox="0 0 20 20" v-html="icons.pin" />
        </button>
      </div>

      <div class="quick">
        <div v-for="t in quickTools" :key="t.icon" class="split" :class="{ active: t.active, dim: t.disabled, gapped: !t.caret || t.icon === 'gear' }">
          <button class="split-main" type="button" :aria-label="t.label">
            <svg class="ico" viewBox="0 0 20 20" v-html="icons[t.icon]" />
          </button>
          <button v-if="t.caret" class="split-caret" type="button" :aria-label="t.label + ' options'"><i class="caret"></i></button>
        </div>
      </div>

      <h1 class="doc-title">hand *</h1>

      <label class="help-search">
        <svg class="ico" viewBox="0 0 20 20" v-html="icons.qmark" />
        <input type="text" placeholder="Search SOLIDWORKS Help" aria-label="Search SOLIDWORKS Help" />
        <svg class="ico" viewBox="0 0 20 20" v-html="icons.lens" />
        <i class="caret wide"></i>
      </label>

      <div class="window-tools">
        <button v-for="t in windowTools" :key="t.icon" type="button" :aria-label="t.label">
          <svg class="ico" viewBox="0 0 20 20" v-html="icons[t.icon]" />
        </button>
      </div>
    </header>

    <section class="ribbon">
      <div v-for="(g, gi) in ribbonGroups" :key="gi" class="group">
        <button v-for="r in g" :key="r.icon" class="cmd" type="button" :disabled="r.disabled" :style="{ width: r.width + 'px' }">
          <svg class="ico" viewBox="0 0 20 20" v-html="icons[r.icon]" />
          <span v-for="l in r.lines" :key="l" class="line">{{ l }}</span>
          <span v-if="r.caret" class="line"><i class="caret"></i></span>
        </button>
      </div>
      <button class="collapse" type="button" aria-label="Collapse ribbon">
        <svg class="ico" viewBox="0 0 20 20" v-html="icons.chevronUp" />
      </button>
    </section>

    <main class="viewport">
      <svg class="scene" viewBox="0 0 1920 870" aria-label="hand assembly, top view">
        <g fill="#b5b5b5" stroke="#111" stroke-width="1">
          <path d="M1058.500 355.500l9 7-9 11z" />
          <rect x="1058.500" y="407.500" width="157" height="94" />
          <rect x="1216.500" y="407.500" width="93" height="94" />
          <rect x="1310.500" y="407.500" width="157" height="94" />
          <path d="M1058 407h410M1216 407v95M1310 407v95" stroke-width="2" />
          <rect x="580.500" y="280.500" width="477" height="48" />
          <rect x="579.500" y="328.500" width="479" height="319" />
          <circle v-for="h in holes" :key="h.x" :cx="h.x" :cy="h.y" r="12.500" :fill="h.fill" stroke-width="1.500" />
        </g>
      </svg>

      <div class="top-strip">
        <nav class="tabs">
          <button v-for="t in tabs" :key="t.name" type="button" :class="{ on: t.name === activeTab }" :style="{ width: t.width + 'px' }">{{ t.name }}</button>
        </nav>
        <div class="view-tools">
          <template v-for="t in viewTools" :key="t.icon">
            <button type="button" :class="{ active: t.active }" :aria-label="t.label">
              <svg class="ico" viewBox="0 0 20 20" v-html="icons[t.icon]" />
            </button>
            <button v-if="t.caret" class="thin" type="button" :aria-label="t.label + ' options'"><i class="caret"></i></button>
          </template>
        </div>
        <div class="doc-tools">
          <button v-for="t in docTools" :key="t.icon" type="button" :aria-label="t.label">
            <svg class="ico" viewBox="0 0 20 20" v-html="icons[t.icon]" />
          </button>
        </div>
      </div>

      <button class="flyout" type="button" aria-label="Show feature tree"><i></i></button>

      <aside class="pane">
        <button v-for="t in paneTools" :key="t.icon" type="button" :class="{ on: t.active }" :aria-label="t.label">
          <svg class="ico" viewBox="0 0 20 20" v-html="icons[t.icon]" />
        </button>
      </aside>

      <svg class="triad" viewBox="0 0 64 64" aria-label="Axis triad">
        <text x="5" y="11" font-size="11" fill="#2a2af0">Z</text>
        <path d="M8 54V26" stroke="#0000a8" stroke-width="4" />
        <path d="M8 18l4 9H4z" fill="#0000a8" />
        <path d="M10 54h26" stroke="#ff8a8a" stroke-width="3" />
        <path d="M34 50l9 4-9 4z" fill="#c40000" />
        <circle cx="8" cy="54" r="4" fill="#005a00" />
        <path d="M9 52l3-4" stroke="#fff" />
        <text x="50" y="54" font-size="11" fill="#ee3c3c">X</text>
      </svg>
    </main>

    <footer class="status">
      <span class="edition">SOLIDWORKS Design Premium for Students 2026 SP0.0 - Academic Use Only</span>
      <span class="defined">Under Defined</span>
      <span class="mode">Editing Assembly</span>
      <span class="interface">Simplified Interface</span>
      <span class="units">IPS</span>
      <i class="caret up"></i>
      <svg class="ico" viewBox="0 0 20 20" v-html="icons.tag" />
      <svg class="ico note" viewBox="0 0 20 20" v-html="icons.note" />
    </footer>

    <footer class="taskbar">
      <button class="weather" type="button">
        <span class="moon">
          <svg viewBox="0 0 30 32" v-html="icons.moon" />
          <span class="count">4</span>
        </span>
        <span class="forecast"><span>49°F</span><span class="sky">Clear</span></span>
      </button>
      <div class="center">
        <button class="start" type="button" aria-label="Start"><svg class="app-ico" viewBox="0 0 32 32" v-html="icons.start" /></button>
        <label class="task-search">
          <svg class="ico" viewBox="0 0 20 20" v-html="icons.taskLens" />
          <input type="text" placeholder="Search" aria-label="Search" />
        </label>
        <button v-for="a in apps" :key="a.icon" class="app" :class="a.state" type="button" :aria-label="a.label">
          <span class="tile">
            <svg class="app-ico" viewBox="0 0 32 32" v-html="icons[a.icon]" />
            <span v-if="a.badge" class="badge">{{ a.badge }}</span>
          </span>
        </button>
      </div>
      <div class="tray">
        <button type="button" class="roomy" aria-label="Hidden icons"><svg class="ico" viewBox="0 0 20 20" v-html="icons.chevronUp" /></button>
        <button type="button" class="roomy last" aria-label="Cloud offline"><svg class="ico" viewBox="0 0 20 20" v-html="icons.cloudOff" /></button>
        <button type="button" aria-label="Network"><svg class="ico" viewBox="0 0 20 20" v-html="icons.wifi" /></button>
        <button type="button" aria-label="Volume"><svg class="ico" viewBox="0 0 20 20" v-html="icons.volume" /></button>
        <button type="button" aria-label="Battery"><svg class="ico" viewBox="0 0 20 20" v-html="icons.battery" /></button>
        <time class="clock"><span>2:48 PM</span><span>11/29/2025</span></time>
      </div>
    </footer>
  </div>
</template>

<style>
body { margin: 0; }
</style>

<style scoped>
.desktop {
  display: flex;
  flex-direction: column;
  min-height: 100vh;
  font-family: "Noto Sans", "Open Sans", sans-serif;
  font-size: 13px;
  color: #111;
  background: #f7f7f7;
}
button {
  font: inherit;
  color: inherit;
  background: none;
  border: 0;
  padding: 0;
  display: flex;
  align-items: center;
  justify-content: center;
  white-space: nowrap;
}
input {
  font: inherit;
  border: 0;
  outline: 0;
  background: none;
  padding: 0;
  min-width: 0;
}
.ico { width: 20px; height: 20px; display: block; flex: none; }
.caret {
  display: block;
  flex: none;
  width: 0;
  height: 0;
  border: 3px solid transparent;
  border-top: 4px solid #333;
  border-bottom: 0;
}
.caret.wide { border-left-width: 4px; border-right-width: 4px; border-top-color: #777; }
.caret.up { border-top: 0; border-bottom: 4px solid #333; }

.titlebar {
  display: flex;
  align-items: center;
  box-sizing: border-box;
  height: 40px;
  border-top: 1px solid #bbb;
  border-bottom: 1px solid #bcbcbc;
  padding-right: 5px;
}
.brand-menu {
  display: flex;
  align-items: center;
  box-sizing: border-box;
  width: 571px;
  height: 100%;
  border-right: 1px solid #bbb;
  padding-right: 4px;
}
.brand {
  display: flex;
  align-items: center;
  gap: 3px;
  width: 176px;
  padding-left: 2px;
  color: #d9291c;
  font-style: italic;
  font-family: "Open Sans", "Noto Sans", sans-serif;
  font-size: 14px;
  white-space: nowrap;
}
.ds { width: 22px; height: 24px; flex: none; }
.menus { display: flex; }
.menus button { padding: 4px 8px 0; }
.pin { margin-left: auto; width: 20px; }
.pin .ico { width: 16px; height: 16px; }
.quick { display: flex; padding-left: 18px; }
.split { display: flex; }
.split.gapped { padding-right: 3px; }
.split-main { width: 30px; height: 32px; }
.split-caret { width: 17px; height: 32px; }
.split.dim .caret { border-top-color: #999; }
.split.active { outline: 1px solid #777; outline-offset: -1px; }
.split.active .split-main { width: 33px; background: #adadad; border-right: 1px solid #777; box-sizing: border-box; }
.split.active .split-caret { width: 14px; }
.doc-title { flex: 1; margin: 0; text-align: center; font-size: 13px; font-weight: 400; padding-top: 4px; }
.help-search {
  display: flex;
  align-items: center;
  box-sizing: border-box;
  width: 252px;
  height: 29px;
  padding: 0 5px;
  border: 1px solid #aaa;
  background: #fff;
}
.help-search input { flex: 1; padding-left: 7px; color: #555; }
.help-search input::placeholder { color: #666; opacity: 1; }
.help-search .caret { margin-left: 6px; }
.window-tools { display: flex; padding-left: 3px; color: #333; }
.window-tools button { width: 41px; height: 32px; }

.ribbon {
  display: flex;
  box-sizing: border-box;
  height: 88px;
  padding: 1px 0 1px 3px;
  border-right: 1px solid #888;
  border-bottom: 1px solid #7d7d7d;
}
.group { display: flex; border-right: 1px solid #c4c4c4; }
.group:nth-last-child(2) { border-right: 0; }
.cmd { flex-direction: column; justify-content: flex-start; padding-top: 6px; }
.cmd:disabled { color: #b9b9b9; }
.line { display: flex; align-items: center; height: 19px; line-height: 19px; }
.collapse { margin-left: auto; align-self: flex-end; width: 28px; height: 26px; }

.viewport {
  position: relative;
  flex: 1;
  min-height: 400px;
  background: radial-gradient(ellipse 42% 80% at 52% 50%, #ffffff 0%, #fafafa 14%, #d5d5d5 100%);
}
.scene { position: absolute; inset: 0; width: 100%; height: 100%; }
.top-strip { position: relative; display: grid; grid-template-columns: 1fr auto 1fr; }
.tabs { display: flex; font-size: 14px; }
.tabs button {
  box-sizing: border-box;
  height: 28px;
  background: #d3d3d3;
  border-right: 1px solid #7d7d7d;
  border-bottom: 1px solid #7d7d7d;
  color: #222;
}
.tabs .on { background: #f7f7f7; border-bottom-color: #f7f7f7; font-weight: 700; color: #333; }
.view-tools { display: flex; align-items: center; padding: 2px 2px 0 0; height: 26px; }
.view-tools button { width: 26px; height: 26px; }
.view-tools .thin { width: 14px; }
.view-tools .caret { border-top-color: #888; }
.view-tools .active { background: #8d8d8d; border: 1px solid #555; box-sizing: border-box; }
.doc-tools { display: flex; justify-content: flex-end; align-items: center; padding: 2px 7px 0 0; color: #8e8e8e; }
.doc-tools button { width: 26px; height: 26px; }
.flyout {
  position: absolute;
  left: 0;
  top: calc(50% - 24px);
  width: 11px;
  height: 49px;
  box-sizing: border-box;
  background: #f9f9f9;
  border: 1px solid #7d7d7d;
  border-left: 0;
}
.flyout i { width: 4px; height: 4px; border: 1px solid #888; border-radius: 50%; background: #ccc; }
.pane {
  position: absolute;
  right: 0;
  top: 58px;
  border: 1px solid #7d7d7d;
  border-right: 0;
}
.pane button { box-sizing: border-box; width: 32px; height: 30px; background: #d5d5d5; }
.pane button + button { border-top: 1px solid #7d7d7d; }
.pane .on { height: 29px; background: #f7f7f7; }
.triad { position: absolute; left: 40px; bottom: 56px; width: 64px; height: 64px; overflow: visible; font-family: "DejaVu Sans", sans-serif; }

.status {
  display: flex;
  align-items: center;
  box-sizing: border-box;
  height: 22px;
  padding: 4px 4px 0 1px;
  border-top: 1px solid #7d7d7d;
  font-size: 14px;
  line-height: 18px;
  white-space: nowrap;
  overflow: hidden;
}
.edition { flex: 1; }
.defined { width: 115px; }
.mode { width: 215px; }
.interface { width: 176px; }
.units { width: 57px; }
.status .ico { width: 16px; height: 16px; margin: 0 8px 4px 26px; }
.status .note { margin: 0 0 4px 0; width: 16px; }

.taskbar {
  display: grid;
  grid-template-columns: 1fr auto 1fr;
  align-items: center;
  height: 60px;
  color: #fff;
  font-size: 14px;
  background: linear-gradient(90deg, #182a34 0%, #182b34 45%, #182a30 60%, #172b39 66%, #232424 75%, #232527 78%, #162a36 84%, #162b33 92%, #182a34 100%);
}
.weather { justify-content: flex-start; padding-left: 26px; gap: 10px; height: 60px; }
.moon { position: relative; display: block; width: 29px; height: 36px; }
.moon svg { width: 29px; height: 36px; }
.count {
  position: absolute;
  right: -4px;
  top: -4px;
  width: 20px;
  height: 20px;
  line-height: 20px;
  border-radius: 50%;
  background: #ff98a4;
  color: #111;
  font-size: 12px;
  text-align: center;
}
.forecast { display: flex; flex-direction: column; text-align: left; line-height: 20px; }
.sky { color: #c3cacd; }
.center { display: flex; align-items: center; }
.app-ico { width: 32px; height: 32px; display: block; }
.start { width: 56px; height: 50px; margin-right: 4px; }
.task-search {
  display: flex;
  align-items: center;
  box-sizing: border-box;
  width: 275px;
  height: 40px;
  margin-right: 2px;
  padding: 0 14px;
  gap: 12px;
  border: 1px solid #4a5a62;
  border-radius: 20px;
  background: #394a53;
  font-size: 16px;
}
.task-search input { flex: 1; color: #fff; }
.task-search input::placeholder { color: #ccd3d6; opacity: 1; }
.app { width: 55px; height: 50px; }
.tile { position: relative; display: flex; align-items: center; justify-content: center; width: 50px; height: 50px; border-radius: 5px; }
.app.current .tile { background: #33363a; }
.app.open .tile::after,
.app.current .tile::after {
  content: "";
  position: absolute;
  bottom: 1px;
  left: 21px;
  width: 8px;
  height: 4px;
  border-radius: 2px;
  background: #9a9fa2;
}
.app.current .tile::after { left: 15px; width: 20px; background: #4cc2ff; }
.badge {
  position: absolute;
  top: 4px;
  right: 1px;
  width: 26px;
  height: 20px;
  line-height: 20px;
  border-radius: 10px;
  background: #4cc2ff;
  color: #111;
  font-size: 12px;
  text-align: center;
}
.tray { display: flex; align-items: center; justify-content: flex-end; padding-right: 24px; }
.tray button { width: 30px; height: 40px; }
.tray .roomy { width: 40px; }
.tray .last { margin-right: 4px; }
.clock { display: flex; flex-direction: column; width: 93px; text-align: right; line-height: 20px; }
</style>
